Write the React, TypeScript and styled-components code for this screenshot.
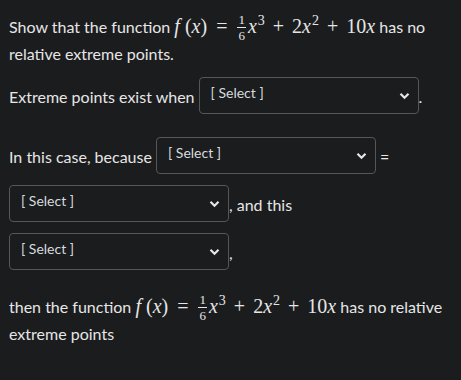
import React from "react";
import styled, { createGlobalStyle } from "styled-components";

const Global = createGlobalStyle`
  html, body { margin: 0; padding: 0; background: #1b1c1e; }
  body { font-family: Lato, "Noto Sans", sans-serif; color: #e6e6e6; }
`;

const Page = styled.div`
  width: 461px;
  height: 380px;
  box-sizing: border-box;
  padding: 13px 9px 0 9px;
  background: #1b1c1e;
`;

const Para = styled.p<{ $lh?: number; $mt?: number }>`
  margin: ${(p) => p.$mt ?? 0}px 0 0 0;
  font-size: 16px;
  line-height: ${(p) => p.$lh ?? 27}px;
`;

const MathSpan = styled.span`
  font-family: "Liberation Serif", "DejaVu Serif", serif;
  font-size: 20px;
  line-height: 1;
  white-space: nowrap;
`;

const I = styled.i`
  font-style: italic;
`;

const Gap = styled.span`
  display: inline-block;
  width: 5px;
`;

const Op = styled.span<{ $pad: number }>`
  padding: 0 ${(p) => p.$pad}px;
`;

const Sup = styled.sup`
  font-size: 14px;
  vertical-align: 8px;
  line-height: 0;
  margin-left: 1px;
`;

const Frac = styled.span`
  display: inline-flex;
  flex-direction: column;
  align-items: center;
  vertical-align: 9px;
  font-size: 13px;
  line-height: 11px;
  margin: -6px 2px -6px 1px;
`;

const Num = styled.span`
  border-bottom: 1px solid #e6e6e6;
  padding: 0 1px 2px;
`;

const Den = styled.span`
  padding-top: 2px;
`;

const SelectBox = styled.span<{ $w: number }>`
  display: inline-flex;
  align-items: center;
  justify-content: space-between;
  box-sizing: border-box;
  width: ${(p) => p.$w}px;
  height: 37px;
  margin: 0 0 7px;
  vertical-align: middle;
  border: 1px solid #545658;
  border-radius: 4px;
  background: #1b1c1e;
  padding: 0 8px 4px 11px;
  font-size: 14px;
  line-height: 16px;
  color: #d7dbde;
`;

const Chevron = styled.svg`
  width: 11px;
  height: 8px;
  margin-top: 5px;
`;

function Select({ w }: { w: number }) {
  return (
    <SelectBox $w={w}>
      <span>[ Select ]</span>
      <Chevron viewBox="0 0 11 8">
        <path d="M1.5 1.8 L5.5 5.8 L9.5 1.8" fill="none" stroke="#e6e6e6" strokeWidth="2.2" />
      </Chevron>
    </SelectBox>
  );
}

function Fx() {
  return (
    <MathSpan>
      <I>f</I>
      <Gap />(<I>x</I>)<Op $pad={9}>=</Op>
      <Frac>
        <Num>1</Num>
        <Den>6</Den>
      </Frac>
      <I>x</I>
      <Sup>3</Sup>
      <Op $pad={8}>+</Op>2<I>x</I>
      <Sup>2</Sup>
      <Op $pad={8}>+</Op>10<I>x</I>
    </MathSpan>
  );
}

export default function App() {
  return (
    <Page>
      <Global />
      <Para>
        Show that the function <Fx /> has no relative extreme points.
      </Para>
      <Para $lh={48} $mt={6}>
        Extreme points exist when <Select w={220} />.
      </Para>
      <Para $lh={48} $mt={12}>
        In this case, because <Select w={220} /> = <Select w={220} />, and this{" "}
        <Select w={220} />,
      </Para>
      <Para $mt={16}>
        then the function <Fx /> has no relative extreme points
      </Para>
    </Page>
  );
}
